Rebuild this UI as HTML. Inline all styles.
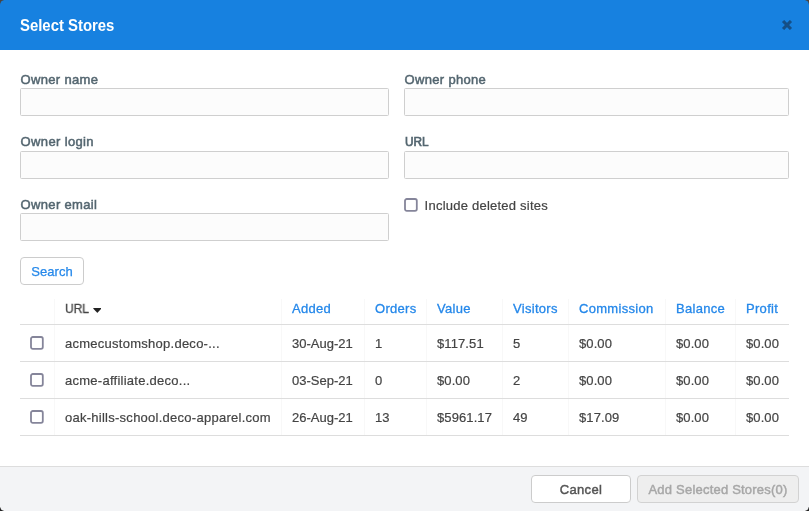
<!DOCTYPE html>
<html>
<head>
<meta charset="utf-8">
<title>Select Stores</title>
<style>
*{box-sizing:border-box;margin:0;padding:0}
html,body{width:809px;height:511px;overflow:hidden;background:#2a2a2a}
body{background:linear-gradient(#4a4440,#4a4440 50%,#262626 50%,#262626)}
body{font-family:"Liberation Sans",Arial,sans-serif;font-size:13px;color:#444;position:relative}
.modal{position:absolute;left:0;top:0;width:809px;height:511px;border-radius:4.5px;overflow:hidden;will-change:transform}
.bd{position:absolute;left:0;top:50px;width:809px;height:416px;background:#fff}
.hdr{position:absolute;left:0;top:0;width:809px;height:50px;background:#1781e0;border-radius:4.5px 4.5px 0 0}
.hdr h1{position:absolute;left:19.9px;top:15.7px;font-size:16px;line-height:20px;font-weight:bold;color:#fff;white-space:nowrap;transform:scaleX(.931);transform-origin:left center}
.close{position:absolute;left:782px;top:20px;width:10px;height:10px}
.lbl{position:absolute;font-size:13px;line-height:16px;color:#546670;white-space:nowrap;-webkit-text-stroke:0.5px #546670;letter-spacing:.27px}
.inp{position:absolute;height:28px;border:1px solid #cfcfcf;border-radius:1.5px;background:#fcfcfc}
.cb{position:absolute;width:14px;height:14px;display:block}
.txt{position:absolute;white-space:nowrap;line-height:16px;-webkit-text-stroke-width:.2px}
.btn{position:absolute;border:1px solid #ccc;border-radius:4px;background:#fff;text-align:center;white-space:nowrap}
table{position:absolute;left:20px;top:299px;width:769px;border-collapse:separate;border-spacing:0;table-layout:fixed}
th,td{text-align:left;font-weight:normal;padding:0 0 0 11px;background:linear-gradient(#f8f8f8,#f8f8f8) left top/1px 100% no-repeat;border-bottom:1px solid #ddd;white-space:nowrap;overflow:hidden;vertical-align:middle;line-height:16px;letter-spacing:.22px}
th{height:26px;color:#2588ea;letter-spacing:.3px;-webkit-text-stroke-width:.3px;vertical-align:top;padding-top:2.2px}
td{height:37px;padding-top:1.5px;-webkit-text-stroke-width:.2px;letter-spacing:.26px}
th:first-child,td:first-child{background:none;padding-left:10px;padding-top:0}
td.n{letter-spacing:.1px}
td.d{letter-spacing:0}
td .cb{position:static}
.foot{position:absolute;left:0;top:466px;width:809px;height:45px;background:#f3f4f6;border-top:1px solid #ddd;border-radius:0 0 4.5px 4.5px}
</style>
</head>
<body>
<div class="modal">
  <div class="bd"></div>
  <div class="hdr">
    <h1>Select Stores</h1>
    <svg class="close" viewBox="0 0 10 10"><path d="M2.1 0.3 L5 3.2 L7.9 0.3 L9.7 2.1 L6.8 5 L9.7 7.9 L7.9 9.7 L5 6.8 L2.1 9.7 L0.3 7.9 L3.2 5 L0.3 2.1 Z" fill="#164f86" stroke="#164f86" stroke-width=".6" stroke-linejoin="round"/></svg>
  </div>

  <div class="lbl" style="left:20.6px;top:72.2px;letter-spacing:.32px">Owner name</div>
  <div class="inp" style="left:20px;top:88.4px;width:369px"></div>
  <div class="lbl" style="left:404.6px;top:72.2px;letter-spacing:.32px">Owner phone</div>
  <div class="inp" style="left:404px;top:88.4px;width:385px"></div>

  <div class="lbl" style="left:20.6px;top:133.7px;letter-spacing:.36px">Owner login</div>
  <div class="inp" style="left:20px;top:151px;width:369px"></div>
  <div class="lbl" style="left:404.8px;top:133.7px;letter-spacing:0;-webkit-text-stroke-width:.7px;transform:scaleX(.91);transform-origin:left center">URL</div>
  <div class="inp" style="left:404px;top:151px;width:385px"></div>

  <div class="lbl" style="left:20.6px;top:197px;letter-spacing:.34px">Owner email</div>
  <div class="inp" style="left:20px;top:213.4px;width:369px"></div>
  <svg class="cb" style="left:404px;top:198px" viewBox="0 0 14 14"><rect x="1" y="1" width="11.8" height="11.8" rx="1.8" fill="#fff" stroke="#85859a" stroke-width="1.8"/></svg>
  <div class="txt" style="left:424.6px;top:198px;letter-spacing:.23px">Include deleted sites</div>

  <div class="btn" style="left:20px;top:257px;width:64px;height:28px;line-height:27px;color:#2588ea;letter-spacing:.08px;-webkit-text-stroke-width:.25px">Search</div>

  <table>
    <colgroup><col style="width:34px"><col style="width:227px"><col style="width:83px"><col style="width:62px"><col style="width:76px"><col style="width:66px"><col style="width:97px"><col style="width:70px"><col style="width:54px"></colgroup>
    <tr><th></th><th style="color:#444;letter-spacing:0"><span style="display:inline-block;transform:scaleX(.92);transform-origin:left center">URL</span><svg width="8.7" height="5" viewBox="0 0 9 5" preserveAspectRatio="none" style="margin-left:1.5px;vertical-align:.7px"><path d="M0.6 0 H8.4 Q9 0.3 8.6 0.8 L4.9 4.6 Q4.5 5 4.1 4.6 L0.4 0.8 Q0 0.3 0.6 0 Z" fill="#222"/></svg></th><th>Added</th><th>Orders</th><th>Value</th><th>Visitors</th><th>Commission</th><th>Balance</th><th>Profit</th></tr>
    <tr><td><svg class="cb" viewBox="0 0 14 14"><rect x="1" y="1" width="11.8" height="11.8" rx="1.8" fill="#fff" stroke="#85859a" stroke-width="1.8"/></svg></td><td>acmecustomshop.deco-...</td><td class="d">30-Aug-21</td><td class="n">1</td><td class="n">$117.51</td><td class="n">5</td><td class="n">$0.00</td><td class="n">$0.00</td><td class="n">$0.00</td></tr>
    <tr><td><svg class="cb" viewBox="0 0 14 14"><rect x="1" y="1" width="11.8" height="11.8" rx="1.8" fill="#fff" stroke="#85859a" stroke-width="1.8"/></svg></td><td>acme-affiliate.deco...</td><td class="d">03-Sep-21</td><td class="n">0</td><td class="n">$0.00</td><td class="n">2</td><td class="n">$0.00</td><td class="n">$0.00</td><td class="n">$0.00</td></tr>
    <tr><td><svg class="cb" viewBox="0 0 14 14"><rect x="1" y="1" width="11.8" height="11.8" rx="1.8" fill="#fff" stroke="#85859a" stroke-width="1.8"/></svg></td><td>oak-hills-school.deco-apparel.com</td><td class="d">26-Aug-21</td><td class="n">13</td><td class="n">$5961.17</td><td class="n">49</td><td class="n">$17.09</td><td class="n">$0.00</td><td class="n">$0.00</td></tr>
  </table>

  <div class="foot">
    <div class="btn" style="left:531px;top:8px;width:100px;height:28px;line-height:27px;color:#555;-webkit-text-stroke:0.45px #555;letter-spacing:.34px">Cancel</div>
    <div class="btn" style="left:637px;top:8px;width:162px;height:28px;line-height:27px;color:#a7a7a7;background:#eee;border-color:#d2d2d2;-webkit-text-stroke:0.45px #a7a7a7;letter-spacing:.21px">Add Selected Stores(0)</div>
  </div>
</div>
</body>
</html>
